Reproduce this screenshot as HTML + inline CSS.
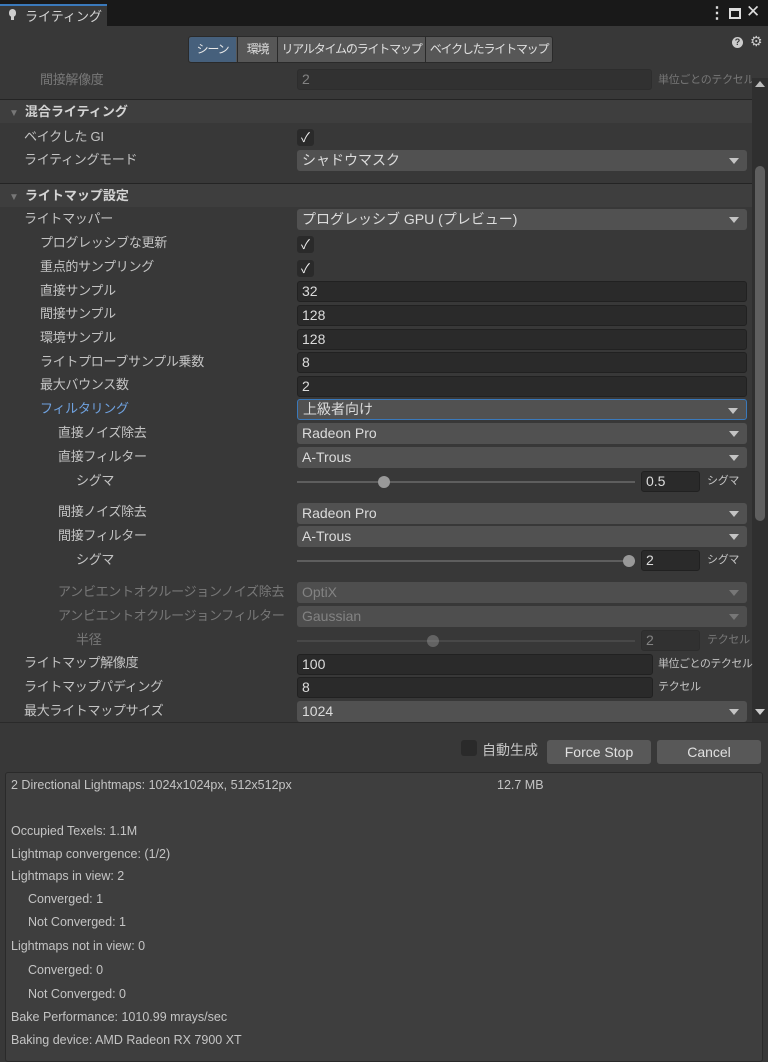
<!DOCTYPE html>
<html><head><meta charset="utf-8"><style>
*{box-sizing:border-box;margin:0;padding:0}
body{width:768px;height:1056px;background:#383838;position:relative;overflow:hidden;font-family:"Liberation Sans","Noto Sans CJK JP",sans-serif;font-size:13px;color:#c4c4c4}
.a{position:absolute;white-space:nowrap}
.l{position:absolute;white-space:nowrap;line-height:20px;height:20px;letter-spacing:-0.3px}
.dd{position:absolute;left:297px;width:450px;height:21px;background:#515151;border-radius:3px;line-height:21px;padding-left:5px;color:#dcdcdc;font-size:14px}
.dd:after{content:"";position:absolute;right:8px;top:8px;border-left:5px solid transparent;border-right:5px solid transparent;border-top:6px solid #c4c4c4}
.tf{position:absolute;left:297px;width:450px;height:21px;background:#2a2a2a;border:1px solid #212121;border-radius:3px;line-height:19px;padding-left:4px;color:#dcdcdc;font-size:14px}
.cb{position:absolute;left:297px;width:17px;height:17px;background:#2a2a2a;border-radius:3px;color:#eee;font-size:13px;text-align:center;line-height:17px}
.hd{position:absolute;left:0;width:752px;height:24px;background:#3e3e3e;border-top:1px solid #242424;font-weight:bold;line-height:23px;color:#d4d4d4}
.hd span{color:#777;font-size:10px;margin:0 6px 0 9px}
.dis{opacity:.45}
.track{position:absolute;left:297px;width:338px;height:2px;background:#5e5e5e}
.knob{position:absolute;width:12px;height:12px;border-radius:6px;background:#999}
.st{position:absolute;left:11px;font-size:12.5px;color:#c4c4c4}
.tab{position:absolute;top:37px;height:25px;line-height:25px;text-align:center;font-size:12px;letter-spacing:-1.2px;color:#e0e0e0;white-space:nowrap;overflow:hidden}
</style></head><body>
<div class="a" style="left:0;top:0;width:768px;height:26px;background:#191919"></div>
<div class="a" style="left:0;top:4px;width:107px;height:22px;background:#383838;border-top:2px solid #3a79bb"></div>
<div class="a" style="left:9px;top:9px;width:7px;height:8px;border-radius:4px;background:#ccc"></div>
<div class="a" style="left:11px;top:16px;width:3px;height:4px;background:#ccc"></div>
<div class="a" style="left:25px;top:6px;font-size:13px;color:#d4d4d4">ライティング</div>
<div class="a" style="left:709px;top:3px;font-size:16px;color:#ddd;font-weight:bold">⋮</div>
<div class="a" style="left:729px;top:8px;width:12px;height:11px;border:2px solid #ddd;border-top-width:3px"></div>
<div class="a" style="left:746px;top:2px;font-size:17px;color:#ddd">✕</div>
<div class="a" style="left:188px;top:36px;width:365px;height:27px;background:#575757;border-radius:3px;border:1px solid #2a2a2a"></div>
<div class="tab" style="left:189px;width:47px;background:#46607c;border-radius:3px 0 0 3px;color:#e8e8e8">シーン</div>
<div class="a" style="left:237px;top:37px;width:1px;height:25px;background:#2a2a2a"></div>
<div class="tab" style="left:238px;width:39px">環境</div>
<div class="a" style="left:277px;top:37px;width:1px;height:25px;background:#2a2a2a"></div>
<div class="tab" style="left:278px;width:147px">リアルタイムのライトマップ</div>
<div class="a" style="left:425px;top:37px;width:1px;height:25px;background:#2a2a2a"></div>
<div class="tab" style="left:426px;width:126px">ベイクしたライトマップ</div>
<div class="a" style="left:732px;top:37px;width:11px;height:11px;border-radius:6px;background:#ccc;color:#383838;font-size:9px;font-weight:bold;text-align:center;line-height:11px">?</div>
<div class="a" style="left:750px;top:33px;font-size:14px;color:#ccc">⚙</div>
<div class="l dis" style="left:40px;top:70px">間接解像度</div>
<div class="tf dis" style="top:69px;width:355px">2</div>
<div class="l dis" style="left:658px;top:70px;font-size:11px">単位ごとのテクセル</div>
<div class="a" style="left:752px;top:78px;width:16px;height:644px;background:#2f2f2f"></div>
<div class="a" style="left:755px;top:166px;width:10px;height:355px;background:#5f5f5f;border-radius:5px"></div>
<div class="a" style="left:755px;top:81px;border-left:5px solid transparent;border-right:5px solid transparent;border-bottom:6px solid #bbb"></div>
<div class="a" style="left:755px;top:709px;border-left:5px solid transparent;border-right:5px solid transparent;border-top:6px solid #ccc"></div>

<div class="hd" style="top:99px"><span>▼</span>混合ライティング</div>
<div class="l" style="left:24px;top:127px">ベイクした GI</div><div class="cb" style="top:129px">✓</div>
<div class="l" style="left:24px;top:150px">ライティングモード</div><div class="dd" style="top:150px">シャドウマスク</div>

<div class="hd" style="top:183px"><span>▼</span>ライトマップ設定</div>
<div class="l" style="left:24px;top:209px">ライトマッパー</div><div class="dd" style="top:209px">プログレッシブ GPU (プレビュー)</div>
<div class="l" style="left:40px;top:233px">プログレッシブな更新</div><div class="cb" style="top:236px">✓</div>
<div class="l" style="left:40px;top:257px">重点的サンプリング</div><div class="cb" style="top:260px">✓</div>
<div class="l" style="left:40px;top:281px">直接サンプル</div><div class="tf" style="top:281px">32</div>
<div class="l" style="left:40px;top:304px">間接サンプル</div><div class="tf" style="top:305px">128</div>
<div class="l" style="left:40px;top:328px">環境サンプル</div><div class="tf" style="top:329px">128</div>
<div class="l" style="left:40px;top:352px">ライトプローブサンプル乗数</div><div class="tf" style="top:352px">8</div>
<div class="l" style="left:40px;top:375px">最大バウンス数</div><div class="tf" style="top:376px">2</div>
<div class="l" style="left:40px;top:399px;color:#6fa2e0">フィルタリング</div><div class="dd" style="top:399px;border:1px solid #3a79bb;line-height:19px">上級者向け</div>
<div class="l" style="left:58px;top:423px">直接ノイズ除去</div><div class="dd" style="top:423px">Radeon Pro</div>
<div class="l" style="left:58px;top:447px">直接フィルター</div><div class="dd" style="top:447px">A-Trous</div>
<div class="l" style="left:76px;top:471px">シグマ</div>
<div class="track" style="top:481px"></div><div class="knob" style="left:378px;top:476px"></div>
<div class="tf" style="left:641px;width:59px;top:471px">0.5</div><div class="l" style="left:707px;top:471px;font-size:11px">シグマ</div>

<div class="l" style="left:58px;top:502px">間接ノイズ除去</div><div class="dd" style="top:503px">Radeon Pro</div>
<div class="l" style="left:58px;top:526px">間接フィルター</div><div class="dd" style="top:526px">A-Trous</div>
<div class="l" style="left:76px;top:550px">シグマ</div>
<div class="track" style="top:560px"></div><div class="knob" style="left:623px;top:555px"></div>
<div class="tf" style="left:641px;width:59px;top:550px">2</div><div class="l" style="left:707px;top:550px;font-size:11px">シグマ</div>

<div class="l dis" style="left:58px;top:582px">アンビエントオクルージョンノイズ除去</div><div class="dd dis" style="top:582px;background:#6a6a6a">OptiX</div>
<div class="l dis" style="left:58px;top:606px">アンビエントオクルージョンフィルター</div><div class="dd dis" style="top:606px;background:#6a6a6a">Gaussian</div>
<div class="l dis" style="left:76px;top:630px">半径</div>
<div class="track dis" style="top:640px"></div><div class="knob dis" style="left:427px;top:635px"></div>
<div class="tf dis" style="left:641px;width:59px;top:630px">2</div><div class="l dis" style="left:707px;top:630px;font-size:11px">テクセル</div>

<div class="l" style="left:24px;top:653px">ライトマップ解像度</div><div class="tf" style="top:654px;width:356px">100</div><div class="l" style="left:658px;top:654px;font-size:11px;letter-spacing:-0.5px">単位ごとのテクセル</div>
<div class="l" style="left:24px;top:677px">ライトマップパディング</div><div class="tf" style="top:677px;width:356px">8</div><div class="l" style="left:658px;top:677px;font-size:11px">テクセル</div>
<div class="l" style="left:24px;top:701px">最大ライトマップサイズ</div><div class="dd" style="top:701px">1024</div>
<div class="a" style="left:0;top:722px;width:768px;height:1px;background:#2a2a2a"></div>

<div class="a" style="left:461px;top:740px;width:16px;height:16px;background:#2a2a2a;border-radius:3px"></div>
<div class="a" style="left:482px;top:740px;font-size:14px">自動生成</div>
<div class="a" style="left:547px;top:740px;width:104px;height:24px;background:#585858;border-radius:3px;text-align:center;line-height:24px;font-size:14px;color:#e0e0e0">Force Stop</div>
<div class="a" style="left:657px;top:740px;width:104px;height:24px;background:#585858;border-radius:3px;text-align:center;line-height:24px;font-size:14px;color:#e0e0e0">Cancel</div>

<div class="a" style="left:5px;top:772px;width:758px;height:290px;background:#3e3e3e;border:1px solid #2a2a2a;border-radius:3px"></div>
<div class="st" style="top:778px">2 Directional Lightmaps: 1024x1024px, 512x512px</div>
<div class="st" style="left:497px;top:778px">12.7 MB</div>
<div class="st" style="top:824px">Occupied Texels: 1.1M</div>
<div class="st" style="top:847px">Lightmap convergence: (1/2)</div>
<div class="st" style="top:869px">Lightmaps in view: 2</div>
<div class="st" style="left:28px;top:892px">Converged: 1</div>
<div class="st" style="left:28px;top:915px">Not Converged: 1</div>
<div class="st" style="top:939px">Lightmaps not in view: 0</div>
<div class="st" style="left:28px;top:963px">Converged: 0</div>
<div class="st" style="left:28px;top:987px">Not Converged: 0</div>
<div class="st" style="top:1010px">Bake Performance: 1010.99 mrays/sec</div>
<div class="st" style="top:1033px">Baking device: AMD Radeon RX 7900 XT</div>
</body></html>
